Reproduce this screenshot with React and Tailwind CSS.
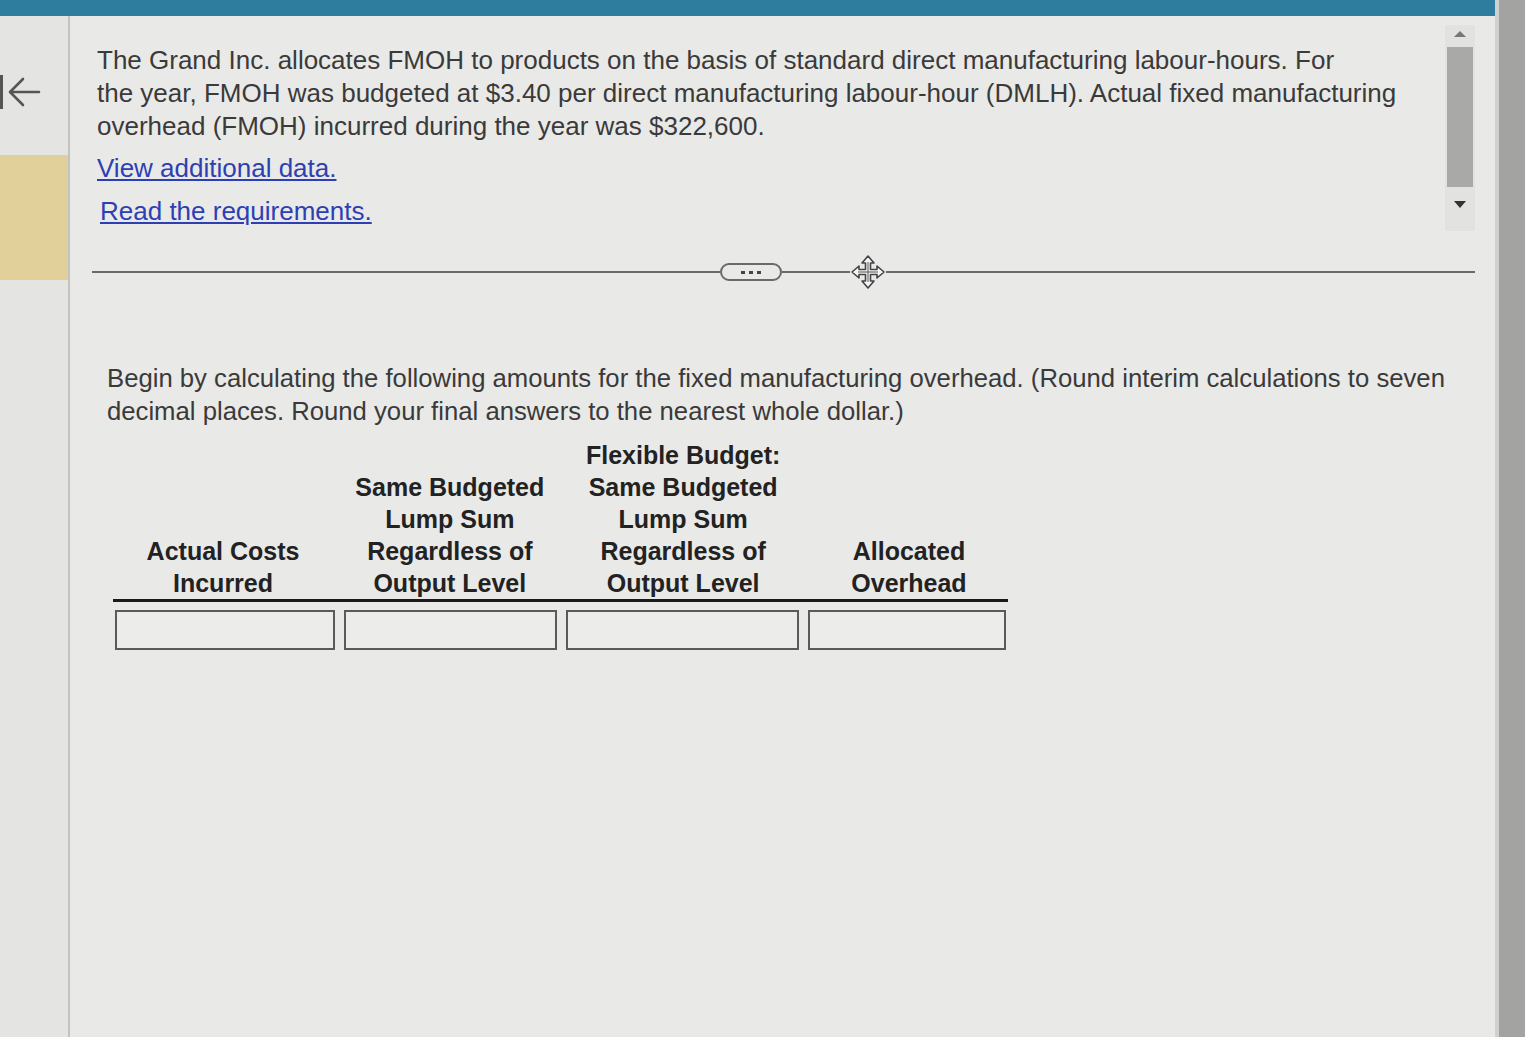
import React from "react";

const columns = [
  { label: ["Actual Costs", "Incurred"], width: "w-[220px]" },
  { label: ["Same Budgeted", "Lump Sum", "Regardless of", "Output Level"], width: "w-[213px]" },
  { label: ["Flexible Budget:", "Same Budgeted", "Lump Sum", "Regardless of", "Output Level"], width: "w-[233px]" },
  { label: ["Allocated", "Overhead"], width: "w-[198px]" },
];

const MoveCursor = () => (
  <svg width="36" height="36" viewBox="0 0 36 36">
    <path
      d="M18 2 L24 9 L20.5 9 L20.5 15.5 L27 15.5 L27 12 L34 18 L27 24 L27 20.5 L20.5 20.5 L20.5 27 L24 27 L18 34 L12 27 L15.5 27 L15.5 20.5 L9 20.5 L9 24 L2 18 L9 12 L9 15.5 L15.5 15.5 L15.5 9 L12 9 Z"
      fill="#f4f4f4"
      stroke="#444"
      strokeWidth="1.6"
      strokeLinejoin="round"
    />
    <path d="M18 8 V28 M8 18 H28" stroke="#555" strokeWidth="1" />
  </svg>
);

export default function App() {
  return (
    <div
      className="flex h-[1037px] w-[1525px] overflow-hidden bg-[#e7e7e5] text-[#3a3a3a]"
      style={{ fontFamily: '"Liberation Sans", Arial, sans-serif' }}
    >
      <div className="flex min-w-0 flex-1 flex-col">
        <div className="h-[16px] bg-[#2f7d9e]" />
        <div className="flex flex-1">
          {/* left rail */}
          <div className="flex w-[70px] shrink-0 flex-col border-r-2 border-[#c2c2c0] bg-[#e4e4e2]">
            <div className="mt-[56px] flex h-[40px] items-center">
              <div className="h-[34px] w-[3px] bg-[#555]" />
              <svg width="38" height="38" viewBox="0 0 38 38" className="ml-[2px]">
                <path d="M34 19 H5 M18 6 L5 19 L18 32" fill="none" stroke="#555" strokeWidth="2.6" strokeLinecap="round" strokeLinejoin="round" />
              </svg>
            </div>
            <div className="mt-[43px] h-[125px] bg-[#e2d09a]" />
          </div>

          {/* main panel */}
          <div className="flex min-w-0 flex-1 flex-col bg-[#e9e9e7]">
            <div className="flex">
              <div className="flex-1 pl-[27px] pt-[28px] text-[26px] leading-[33px]">
                <p className="whitespace-nowrap">
                  The Grand Inc. allocates FMOH to products on the basis of standard direct manufacturing labour-hours. For
                  <br />
                  the year, FMOH was budgeted at $3.40 per direct manufacturing labour-hour (DMLH). Actual fixed manufacturing
                  <br />
                  overhead (FMOH) incurred during the year was $322,600.
                </p>
                <a href="#" className="mt-[9px] block w-fit text-[#2d3fb3] underline underline-offset-2">
                  View additional data.
                </a>
                <a href="#" className="mt-[10px] block w-fit pl-[3px] text-[#2d3fb3] underline underline-offset-2">
                  Read the requirements.
                </a>
              </div>
              <div className="mr-[20px] mt-[9px] flex h-[206px] w-[30px] flex-col items-center bg-[#e2e2e0]">
                <div className="mt-[6px] h-0 w-0 border-x-[6px] border-b-[6px] border-x-transparent border-b-[#777]" />
                <div className="mt-[10px] h-[140px] w-[26px] bg-[#a9a9a7]" />
                <div className="mt-[14px] h-0 w-0 border-x-[6px] border-t-[7px] border-x-transparent border-t-[#333]" />
              </div>
            </div>

            {/* divider */}
            <div className="ml-[22px] mr-[20px] mt-[23px] flex items-center">
              <div className="h-[2px] w-[628px] bg-[#6a6a6a]" />
              <div className="flex h-[18px] w-[62px] items-center justify-center gap-[4px] rounded-full border-2 border-[#6a6a6a]">
                <span className="h-[3px] w-[4px] bg-[#444]" />
                <span className="h-[3px] w-[4px] bg-[#444]" />
                <span className="h-[3px] w-[4px] bg-[#444]" />
              </div>
              <div className="h-[2px] w-[68px] bg-[#6a6a6a]" />
              <MoveCursor />
              <div className="h-[2px] flex-1 bg-[#6a6a6a]" />
            </div>

            {/* instructions */}
            <p className="ml-[37px] mt-[72px] whitespace-nowrap text-[25.7px] leading-[33px]">
              Begin by calculating the following amounts for the fixed manufacturing overhead. (Round interim calculations to seven
              <br />
              decimal places. Round your final answers to the nearest whole dollar.)
            </p>

            {/* table */}
            <div className="ml-[43px] mt-[11px] w-[895px]">
              <div className="flex items-end justify-between border-b-[3px] border-[#1a1a1a] text-[25px] font-bold leading-[32px] text-[#222]">
                {columns.map((c) => (
                  <div key={c.label.join()} className={`${c.width} text-center`}>
                    {c.label.map((l) => (
                      <div key={l}>{l}</div>
                    ))}
                  </div>
                ))}
              </div>
              <div className="mt-[8px] flex justify-between px-[2px]">
                {columns.map((c) => (
                  <input
                    key={c.label.join()}
                    className={`${c.width} h-[40px] border-2 border-[#5a5a5a] bg-[#ececea]`}
                  />
                ))}
              </div>
            </div>
          </div>
        </div>
      </div>

      {/* right edge strip */}
      <div className="flex w-[30px] shrink-0">
        <div className="w-[4px] bg-[#d0d0ce]" />
        <div className="flex-1 bg-[#a3a3a1]" />
      </div>
    </div>
  );
}
